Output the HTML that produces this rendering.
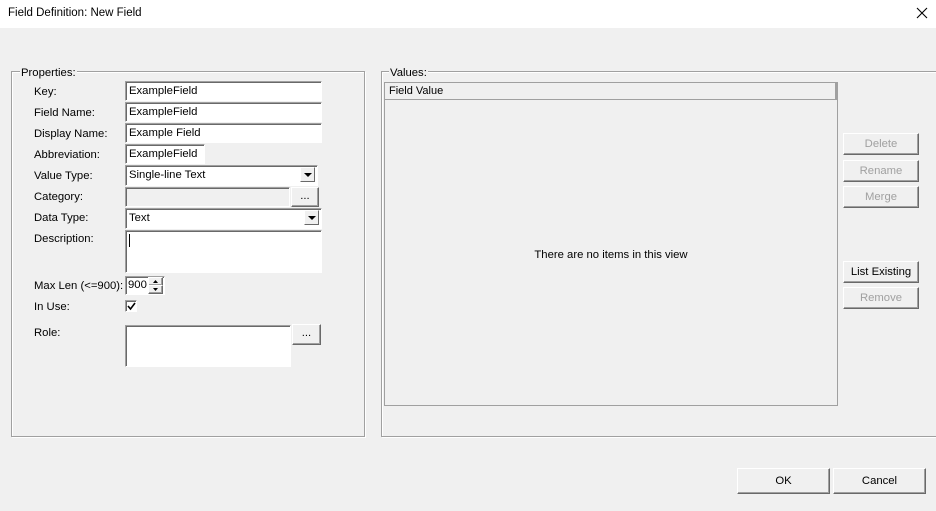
<!DOCTYPE html>
<html><head><meta charset="utf-8"><style>
*{box-sizing:border-box;margin:0;padding:0}
body{width:936px;height:511px;background:#f0f0f0;font-family:"Liberation Sans",Arial,sans-serif;font-size:11.3px;color:#000;position:relative;overflow:hidden}
.a{position:absolute}
.title{left:0;top:0;width:936px;height:28px;background:#fff}
.lbl{position:absolute;left:34px;line-height:14px;white-space:nowrap}
.grp{position:absolute;border:1px solid #a0a0a0;box-shadow:1px 1px 0 #fff, inset 1px 1px 0 #fff}
.gl{position:absolute;background:#f0f0f0;padding:0 1px;line-height:12px}
.in{position:absolute;background:#fff;border:1px solid;border-color:#a0a0a0 #fff #fff #a0a0a0;box-shadow:inset 1px 1px 0 #696969;padding-left:3px;padding-top:1px;line-height:17px;white-space:nowrap;overflow:hidden}
.btn{position:absolute;background:#f0f0f0;border:1px solid;border-color:#fff #696969 #696969 #fff;box-shadow:inset -1px -1px 0 #a0a0a0;text-align:center}
.dis{color:#a0a0a0}
.arr{position:absolute;right:2px;top:1px;width:15px;height:15px;background:#f0f0f0;border:1px solid;border-color:#fff #696969 #696969 #fff}
.arr:after{content:"";position:absolute;left:3px;top:5px;border-left:4px solid transparent;border-right:4px solid transparent;border-top:4px solid #000}
</style></head><body>
<div class="a title"></div>
<div class="a" style="left:8px;top:6px;line-height:15px;font-size:11.5px">Field Definition: New Field</div>
<svg class="a" style="left:916px;top:7px" width="12" height="12"><path d="M1 1L11 11M11 1L1 11" stroke="#000" stroke-width="1.1"/></svg>

<div class="grp" style="left:11px;top:71px;width:354px;height:366px"></div>
<div class="gl" style="left:20px;top:67px">Properties:</div>

<div class="lbl" style="top:85px">Key:</div>
<div class="lbl" style="top:106px">Field Name:</div>
<div class="lbl" style="top:127px">Display Name:</div>
<div class="lbl" style="top:148px">Abbreviation:</div>
<div class="lbl" style="top:169px">Value Type:</div>
<div class="lbl" style="top:190px">Category:</div>
<div class="lbl" style="top:211px">Data Type:</div>
<div class="lbl" style="top:232px">Description:</div>
<div class="lbl" style="top:279px">Max Len (&lt;=900):</div>
<div class="lbl" style="top:300px">In Use:</div>
<div class="lbl" style="top:326px">Role:</div>

<div class="in" style="left:125px;top:81px;width:197px;height:20px">ExampleField</div>
<div class="in" style="left:125px;top:102px;width:197px;height:20px">ExampleField</div>
<div class="in" style="left:125px;top:123px;width:197px;height:20px">Example Field</div>
<div class="in" style="left:125px;top:144px;width:80px;height:20px">ExampleField</div>
<div class="in" style="left:125px;top:165px;width:193px;height:21px;line-height:19px;padding-top:0">Single-line Text<div class="arr"></div></div>
<div class="in" style="left:125px;top:187px;width:165px;height:20px;background:#f0f0f0"></div>
<div class="btn" style="left:291px;top:187px;width:28px;height:20px;line-height:16px">...</div>
<div class="in" style="left:125px;top:208px;width:197px;height:21px;line-height:19px;padding-top:0">Text<div class="arr"></div></div>
<div class="in" style="left:125px;top:230px;width:197px;height:43px"><div style="position:absolute;left:3px;top:3px;width:1px;height:13px;background:#000"></div></div>
<div class="in" style="left:125px;top:276px;width:40px;height:19px;padding-left:2px;padding-top:0">900</div>
<div class="btn" style="left:148px;top:277px;width:15px;height:9px"><svg class="a" style="left:4px;top:2px" width="5" height="3"><path d="M2.5 0L5 3H0Z" fill="#000"/></svg></div>
<div class="btn" style="left:148px;top:285px;width:15px;height:9px"><svg class="a" style="left:4px;top:2px" width="5" height="3"><path d="M0 0H5L2.5 3Z" fill="#000"/></svg></div>
<div class="in" style="left:125px;top:300px;width:12px;height:12px;padding:0"><svg class="a" style="left:1px;top:1px" width="9" height="9"><path d="M1 4L3.5 7L8 1" stroke="#000" stroke-width="1.6" fill="none"/></svg></div>
<div class="in" style="left:125px;top:325px;width:166px;height:42px"></div>
<div class="btn" style="left:292px;top:324px;width:29px;height:21px;line-height:17px">...</div>

<div class="grp" style="left:381px;top:71px;width:570px;height:366px"></div>
<div class="gl" style="left:389px;top:67px">Values:</div>
<div class="a" style="left:384px;top:82px;width:454px;height:324px;border:1px solid #a0a0a0;background:#f0f0f0"></div>
<div class="a" style="left:385px;top:83px;width:452px;height:17px;border-bottom:1px solid #a0a0a0;border-right:2px solid #a0a0a0;padding-left:4px;line-height:17px;font-size:11px">Field Value</div>
<div class="a" style="left:385px;top:248px;width:452px;text-align:center;line-height:14px">There are no items in this view</div>

<div class="btn dis" style="left:843px;top:133px;width:76px;height:22px;line-height:20px">Delete</div>
<div class="btn dis" style="left:843px;top:160px;width:76px;height:22px;line-height:20px">Rename</div>
<div class="btn dis" style="left:843px;top:186px;width:76px;height:22px;line-height:20px">Merge</div>
<div class="btn" style="left:843px;top:261px;width:76px;height:22px;line-height:20px">List Existing</div>
<div class="btn dis" style="left:843px;top:287px;width:76px;height:22px;line-height:20px">Remove</div>

<div class="btn" style="left:737px;top:468px;width:93px;height:26px;line-height:24px">OK</div>
<div class="btn" style="left:833px;top:468px;width:93px;height:26px;line-height:24px">Cancel</div>
</body></html>
